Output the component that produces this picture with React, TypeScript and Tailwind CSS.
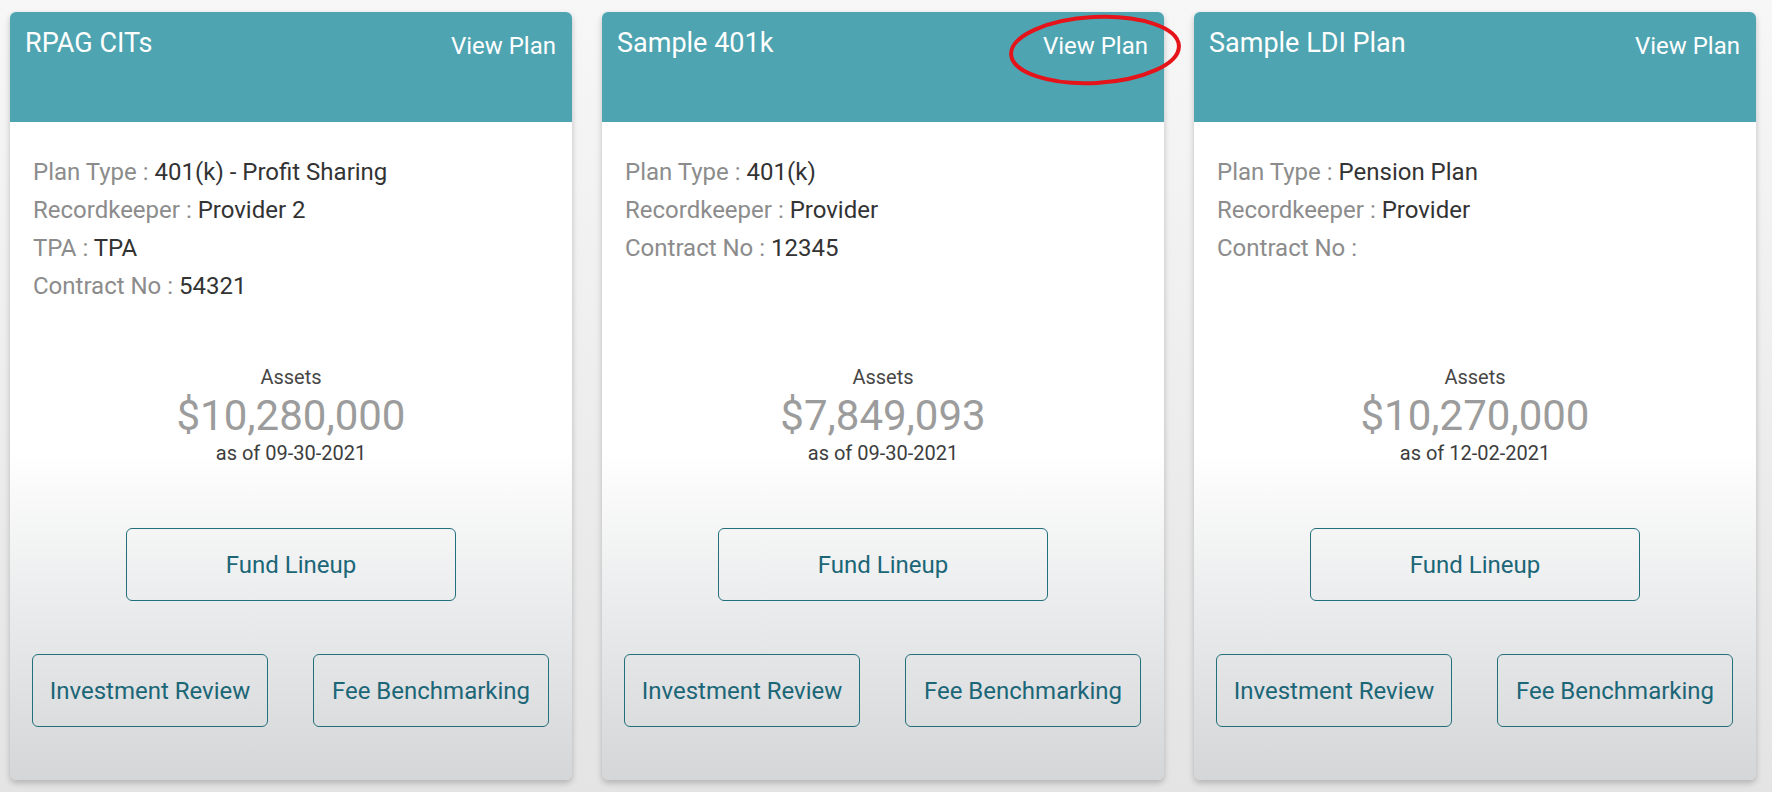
const PLANS = [
  {
    name: 'RPAG CITs',
    details: [
      ['Plan Type', '401(k) - Profit Sharing'],
      ['Recordkeeper', 'Provider 2'],
      ['TPA', 'TPA'],
      ['Contract No', '54321'],
    ],
    assets: '$10,280,000',
    asOf: '09-30-2021',
  },
  {
    name: 'Sample 401k',
    details: [
      ['Plan Type', '401(k)'],
      ['Recordkeeper', 'Provider'],
      ['Contract No', '12345'],
    ],
    assets: '$7,849,093',
    asOf: '09-30-2021',
  },
  {
    name: 'Sample LDI Plan',
    details: [
      ['Plan Type', 'Pension Plan'],
      ['Recordkeeper', 'Provider'],
      ['Contract No', ''],
    ],
    assets: '$10,270,000',
    asOf: '12-02-2021',
  },
];

function OutlineButton({ label, className }: { label: string; className?: string }) {
  return (
    <button
      className={`h-[73px] rounded-[6px] border border-[#236f7c] text-[24px] text-[#1b6677] bg-transparent ${className ?? ''}`}
    >
      {label}
    </button>
  );
}

function PlanCard({ plan }: { plan: (typeof PLANS)[number] }) {
  return (
    <div className="w-[562px] h-[768px] flex flex-col rounded-[6px] overflow-hidden shadow-[0_3px_6px_rgba(0,0,0,0.22)]">
      {/* Header */}
      <div className="h-[110px] bg-[#4ea4b1] flex justify-between items-start pl-[15px] pr-[16px] pt-[15px] text-white">
        <span className="text-[27px] leading-[32px]">{plan.name}</span>
        <span className="text-[24px] leading-[30px] mt-[4px]">View Plan</span>
      </div>

      {/* Body */}
      <div className="flex-1 flex flex-col bg-gradient-to-b from-white from-[50%] to-[#d4d6d8] pt-[31px]">
        <div className="h-[152px] pl-[23px] text-[24px] leading-[38px]">
          {plan.details.map(([label, value]) => (
            <div key={label}>
              <span className="text-[#8c8c8c]">{label} : </span>
              <span className="text-[#333333]">{value}</span>
            </div>
          ))}
        </div>

        <div className="mt-[60px] flex flex-col items-center">
          <span className="text-[20px] leading-[24px] text-[#474747]">Assets</span>
          <span className="text-[42px] leading-[50px] mt-[2px] text-[#9c9c9c]">{plan.assets}</span>
          <span className="text-[20px] leading-[24px] text-[#3d3d3d]">as of {plan.asOf}</span>
        </div>

        <div className="mt-[63px] flex justify-center">
          <OutlineButton label="Fund Lineup" className="w-[330px]" />
        </div>

        <div className="mt-[53px] flex justify-between pl-[22px] pr-[23px]">
          <OutlineButton label="Investment Review" className="w-[236px]" />
          <OutlineButton label="Fee Benchmarking" className="w-[236px]" />
        </div>
      </div>
    </div>
  );
}

export default function App() {
  return (
    <div
      className="relative w-[1772px] h-[792px] overflow-hidden bg-gradient-to-b from-[#f7f7f7] to-[#e4e4e4]"
      style={{ fontFamily: 'Roboto, "Open Sans", sans-serif' }}
    >
      <div className="flex gap-[30px] pl-[10px] pt-[12px]">
        {PLANS.map((plan) => (
          <PlanCard key={plan.name} plan={plan} />
        ))}
      </div>

      {/* red annotation circle around the second View Plan */}
      <svg className="absolute left-[1006px] top-[12px]" width="180" height="76" viewBox="0 0 180 76">
        <ellipse
          cx="89"
          cy="38"
          rx="84"
          ry="33"
          fill="none"
          stroke="#e5141b"
          strokeWidth="4"
          transform="rotate(-3 89 38)"
        />
      </svg>
    </div>
  );
}
